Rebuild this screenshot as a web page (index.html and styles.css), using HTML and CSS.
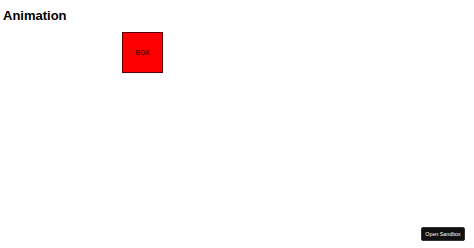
FILE: index.html
```html
<!DOCTYPE html>
<html>
<head>
<meta charset="utf-8">
<link rel="stylesheet" href="styles.css">
</head>
<body>
<main class="page">
  <h1 class="title">Animation</h1>
  <div class="stage">
    <div class="box">BOX</div>
  </div>
</main>
<button class="sandbox-btn">Open Sandbox</button>
</body>
</html>
```
FILE: styles.css
```css
html, body {
  margin: 0;
  padding: 0;
  background: #fff;
}
body {
  font-family: "Liberation Sans", Arial, sans-serif;
  color: #000;
}
.page {
  padding: 8px 3px 0 3px;
}
.title {
  margin: 0;
  font-size: 13px;
  line-height: 16px;
  font-weight: bold;
}
.stage {
  display: flex;
  padding-top: 8px;
  padding-left: 119px;
}
.box {
  width: 41px;
  height: 41px;
  box-sizing: border-box;
  background: #ff0000;
  border: 1px solid #5a0000;
  display: flex;
  align-items: center;
  justify-content: center;
  font-size: 6.5px;
  font-weight: bold;
  color: #5a0000;
}
.sandbox-btn {
  position: fixed;
  right: 9px;
  bottom: 7px;
  width: 44px;
  height: 14px;
  padding: 0;
  border: 1px solid #333;
  border-radius: 2px;
  background: #111;
  color: #fff;
  font-family: "Liberation Sans", Arial, sans-serif;
  font-size: 5.3px;
  line-height: 12px;
}
```
